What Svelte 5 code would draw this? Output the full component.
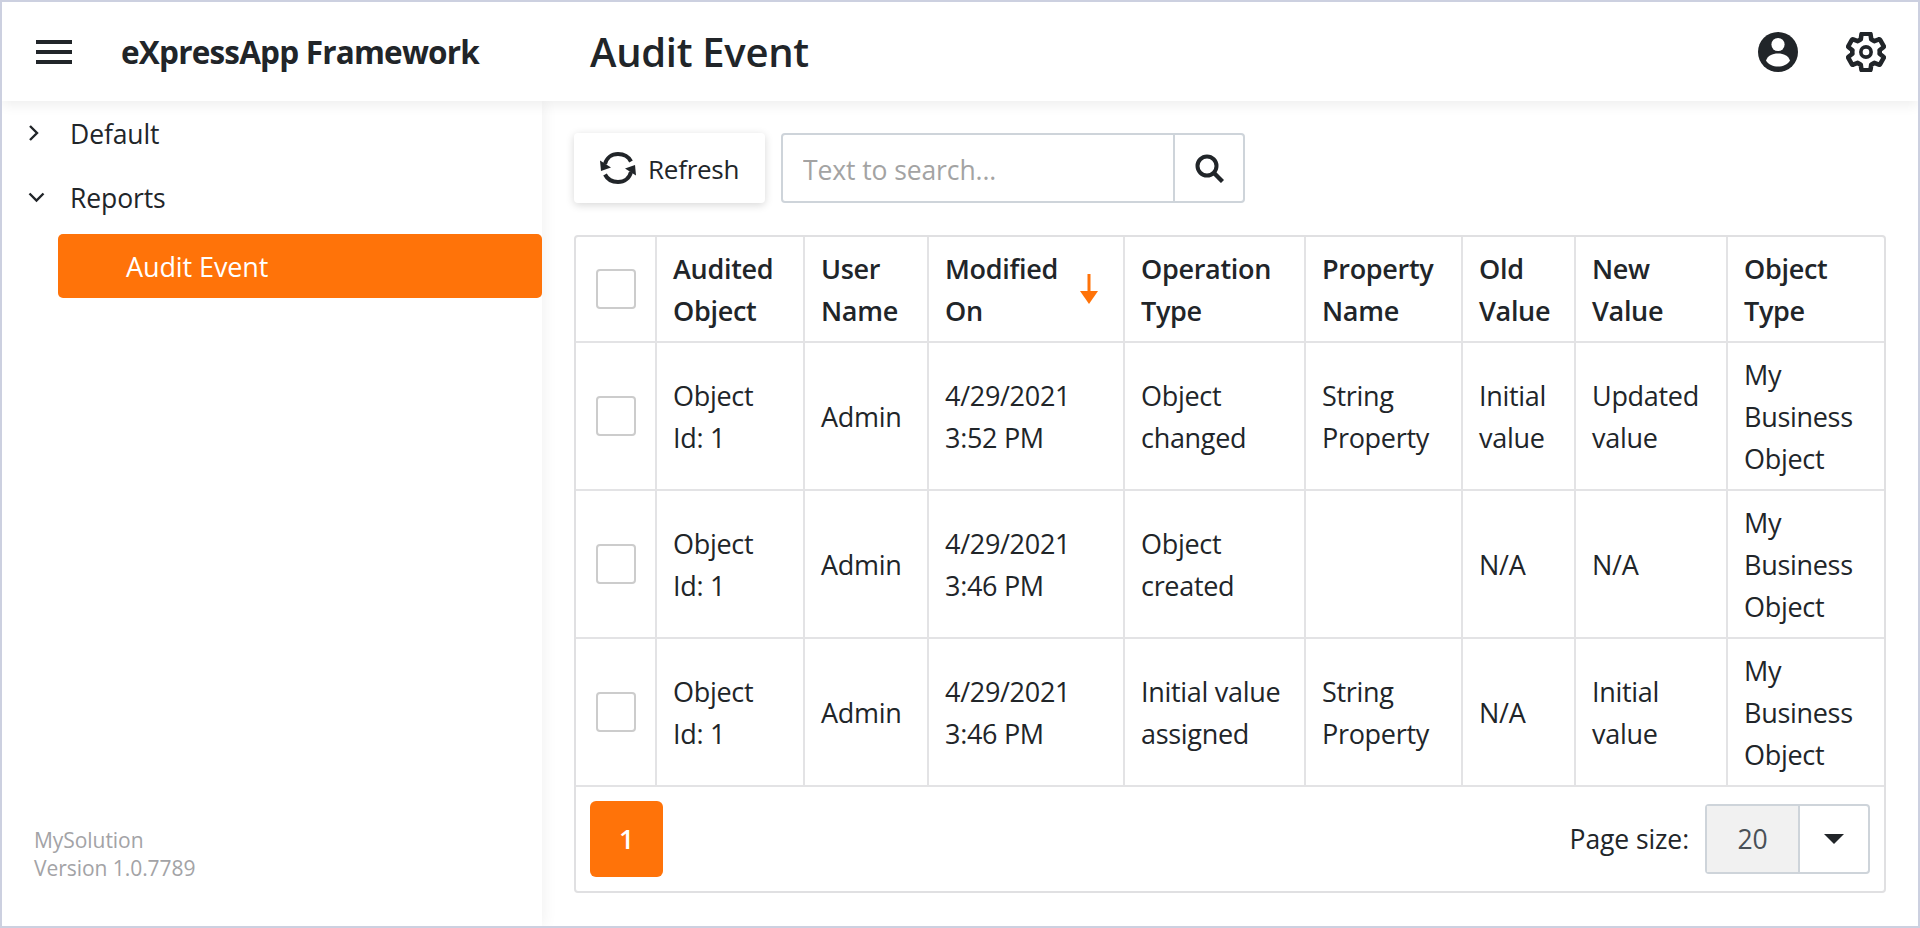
<script>
  const columns = [
    { label: ['Audited', 'Object'], width: 148 },
    { label: ['User', 'Name'], width: 124 },
    { label: ['Modified', 'On'], width: 196, sorted: true },
    { label: ['Operation', 'Type'], width: 181 },
    { label: ['Property', 'Name'], width: 157 },
    { label: ['Old', 'Value'], width: 113 },
    { label: ['New', 'Value'], width: 152 },
    { label: ['Object', 'Type'], width: 156 }
  ];
  const rows = [
    ['Object\nId: 1', 'Admin', '4/29/2021 3:52 PM', 'Object changed', 'String Property', 'Initial value', 'Updated value', 'My Business Object'],
    ['Object\nId: 1', 'Admin', '4/29/2021 3:46 PM', 'Object created', '', 'N/A', 'N/A', 'My Business Object'],
    ['Object\nId: 1', 'Admin', '4/29/2021 3:46 PM', 'Initial value assigned', 'String Property', 'N/A', 'Initial value', 'My Business Object']
  ];
</script>

<div class="app">
  <header class="topbar">
    <svg class="burger" width="36" height="24" viewBox="0 0 36 24" fill="#212529" aria-hidden="true">
      <rect y="0" width="36" height="4" /><rect y="10" width="36" height="4" /><rect y="20" width="36" height="4" />
    </svg>
    <div class="brand">eXpressApp Framework</div>
    <h1 class="page-title">Audit Event</h1>
    <div class="top-actions">
      <svg width="40" height="40" viewBox="0 0 40 40" aria-hidden="true">
        <circle cx="20" cy="20" r="20" fill="#212529" />
        <circle cx="20" cy="12.5" r="6.6" fill="#fff" />
        <path d="M8 28.5C10 23.5 14 21.5 20 21.5S30 23.5 32 28.5C29.5 32.5 25 34.5 20 34.5S10.500 32.500 8 28.500Z" fill="#fff" />
      </svg>
      <svg width="40" height="40" viewBox="1.500 1.500 21 21" fill="none" stroke="#212529" aria-hidden="true">
        <path stroke-width="2.400" stroke-linejoin="round" d="M19.140 12.940c.04-.3.06-.61.06-.94 0-.32-.02-.64-.07-.94l2.030-1.580c.18-.14.23-.41.120-.61l-1.920-3.320c-.12-.22-.37-.29-.59-.22l-2.390.96c-.5-.38-1.030-.7-1.620-.94l-.36-2.540c-.04-.24-.24-.41-.48-.41h-3.840c-.24 0-.43.17-.47.41l-.36 2.540c-.59.24-1.130.57-1.620.94l-2.390-.96c-.22-.08-.47 0-.59.22L2.740 8.870c-.12.21-.08.47.12.61l2.030 1.580c-.05.3-.09.63-.09.94s.02.64.07.94l-2.030 1.580c-.18.14-.23.41-.12.61l1.920 3.320c.12.22.37.29.59.22l2.390-.96c.5.38 1.030.7 1.620.94l.36 2.540c.05.24.24.41.48.41h3.840c.24 0 .44-.17.47-.41l.36-2.540c.59-.24 1.130-.56 1.620-.94l2.390.96c.22.08.47 0 .59-.22l1.920-3.320c.12-.22.07-.47-.12-.61l-2.010-1.580z" />
        <circle cx="12" cy="12" r="2.700" stroke-width="1.900" />
      </svg>
    </div>
  </header>

  <div class="body">
    <aside class="sidebar">
      <nav class="nav">
        <div class="nav-row">
          <span class="chev">
            <svg width="12" height="16" viewBox="0 0 12 16" fill="none" stroke="#212529" stroke-width="2.400" aria-hidden="true"><path d="M2 1l7 7-7 7" /></svg>
          </span>
          Default
        </div>
        <div class="nav-row">
          <span class="chev">
            <svg width="17" height="11" viewBox="0 0 17 11" fill="none" stroke="#212529" stroke-width="2.400" aria-hidden="true"><path d="M1.500 1.500l7 7 7-7" /></svg>
          </span>
          Reports
        </div>
        <div class="nav-active">Audit Event</div>
      </nav>
      <div class="about">MySolution<br />Version 1.0.7789</div>
    </aside>

    <main class="main">
      <div class="toolbar">
        <button class="refresh">
          <svg width="36" height="32" viewBox="0 0 36 32" fill="none" aria-hidden="true">
            <path d="M31 9.500C28.500 4.500 23.800 2 18 2 11.500 2 6.500 6 5 12" stroke="#212529" stroke-width="4" />
            <path d="M0 8.500 1 19 11 15.500Z" fill="#212529" />
            <g transform="rotate(180 18 16)">
              <path d="M31 9.500C28.500 4.500 23.800 2 18 2 11.500 2 6.500 6 5 12" stroke="#212529" stroke-width="4" />
              <path d="M0 8.500 1 19 11 15.500Z" fill="#212529" />
            </g>
          </svg>
          <span>Refresh</span>
        </button>
        <div class="search">
          <input class="search-input" placeholder="Text to search..." />
          <span class="search-btn">
            <svg width="29" height="29" viewBox="0 0 29 29" fill="none" stroke="#212529" aria-hidden="true">
              <circle cx="12" cy="12" r="9.500" stroke-width="4" />
              <path d="M19 19l8.500 8.500" stroke-width="4.400" />
            </svg>
          </span>
        </div>
      </div>

      <section class="card">
        <table>
          <colgroup>
            <col style="width:81px" />
            {#each columns as c}
              <col style="width:{c.width}px" />
            {/each}
          </colgroup>
          <thead>
            <tr>
              <th class="check"><span class="box"></span></th>
              {#each columns as c}
                <th>
                  {c.label[0]}<br />{c.label[1]}
                  {#if c.sorted}
                    <svg class="sort" width="18" height="30" viewBox="0 0 18 30" fill="#ff7309" aria-hidden="true">
                      <rect x="7.500" y="0" width="3" height="20" /><path d="M0 17h18L9 30z" />
                    </svg>
                  {/if}
                </th>
              {/each}
            </tr>
          </thead>
          <tbody>
            {#each rows as row}
              <tr>
                <td class="check"><span class="box"></span></td>
                {#each row as cell}
                  <td>{cell}</td>
                {/each}
              </tr>
            {/each}
          </tbody>
        </table>
        <div class="pager">
          <button class="page-btn">1</button>
          <div class="page-size">
            <span>Page size:</span>
            <div class="size-select">
              <span class="size-value">20</span>
              <span class="size-caret">
                <svg width="20" height="10" viewBox="0 0 20 10" fill="#212529" aria-hidden="true"><path d="M0 0h20L10 10z" /></svg>
              </span>
            </div>
          </div>
        </div>
      </section>
    </main>
  </div>
</div>

<style>
  :global(body) {
    margin: 0;
    background: #fff;
  }
  .app {
    box-sizing: border-box;
    width: 1920px;
    height: 928px;
    border: 2px solid #ccd0e0;
    display: flex;
    flex-direction: column;
    font-family: "Open Sans", "Noto Sans", sans-serif;
    font-size: 26.5px;
    line-height: 42px;
    letter-spacing: -0.1px;
    color: #212529;
    background: #fff;
    overflow: hidden;
  }
  .topbar {
    flex: 0 0 99px;
    display: flex;
    align-items: center;
    padding: 0 32px 0 34px;
    position: relative;
    z-index: 2;
    background: #fff;
    box-shadow: 0 4px 12px rgba(0, 0, 0, 0.07);
  }
  .burger {
    flex: none;
    margin-right: 49px;
  }
  .brand {
    width: 469px;
    flex: none;
    font-size: 31.5px;
    font-weight: 700;
    letter-spacing: -0.8px;
  }
  .page-title {
    margin: 0;
    font-size: 40px;
    font-weight: 600;
    letter-spacing: -0.3px;
  }
  .top-actions {
    margin-left: auto;
    display: flex;
    gap: 48px;
  }
  .top-actions svg {
    display: block;
  }
  .body {
    flex: 1;
    display: flex;
    min-height: 0;
  }
  .sidebar {
    flex: 0 0 540px;
    display: flex;
    flex-direction: column;
    justify-content: space-between;
    position: relative;
    z-index: 1;
    background: #fff;
    box-shadow: 2px 0 14px rgba(0, 0, 0, 0.06);
  }
  .nav-row {
    box-sizing: border-box;
    height: 64px;
    display: flex;
    align-items: center;
    padding: 2px 0 0 24px;
  }
  .chev {
    width: 44px;
    display: flex;
    align-items: center;
    padding-left: 2px;
    margin-top: -2px;
    box-sizing: border-box;
  }
  .nav-active {
    box-sizing: border-box;
    margin: 5px 0 0 56px;
    height: 64px;
    display: flex;
    align-items: center;
    padding: 2px 0 0 68px;
    background: #ff7309;
    color: #fff;
    border-radius: 5px;
    font-size: 27px;
  }
  .about {
    padding: 0 0 44px 32px;
    font-size: 21px;
    line-height: 28px;
    letter-spacing: -0.05px;
    color: #a3a3a6;
  }
  .main {
    flex: 1;
    min-width: 0;
    padding: 32px 32px 0;
    display: flex;
    flex-direction: column;
    gap: 32px;
  }
  .toolbar {
    display: flex;
    height: 70px;
    gap: 16px;
  }
  .refresh {
    width: 191px;
    display: flex;
    align-items: center;
    gap: 12px;
    padding: 2px 0 0 26px;
    border: 0;
    border-radius: 4px;
    background: #fff;
    box-shadow: 0 2px 8px rgba(0, 0, 0, 0.16);
    font: inherit;
    font-size: 26px;
    letter-spacing: -0.25px;
    color: inherit;
  }
  .refresh svg {
    margin-top: -2px;
  }
  .search {
    box-sizing: border-box;
    width: 464px;
    display: flex;
    border: 2px solid #ced4da;
    border-radius: 4px;
  }
  .search-input {
    flex: 1;
    min-width: 0;
    border: 0;
    outline: 0;
    padding: 3px 20px 0;
    background: transparent;
    font: inherit;
    letter-spacing: inherit;
    color: inherit;
  }
  .search-input::placeholder {
    color: #a3a3a3;
    opacity: 1;
  }
  .search-btn {
    flex: 0 0 70px;
    display: flex;
    align-items: center;
    justify-content: center;
    border-left: 2px solid #ced4da;
    box-sizing: border-box;
  }
  .card {
    box-sizing: border-box;
    height: 658px;
    border: 2px solid #e0e0e2;
    border-radius: 4px;
    display: flex;
    flex-direction: column;
  }
  table {
    width: 1308px;
    table-layout: fixed;
    border-collapse: separate;
    border-spacing: 0;
  }
  th,
  td {
    box-sizing: border-box;
    padding: 11px 14px 9px 16px;
    border-right: 2px solid #e3e3e5;
    border-bottom: 2px solid #e3e3e5;
    text-align: left;
    vertical-align: middle;
    white-space: pre-line;
    font-size: 27px;
    letter-spacing: -0.3px;
  }
  th:last-child,
  td:last-child {
    border-right: 0;
  }
  th {
    font-weight: 600;
    position: relative;
  }
  th.check,
  td.check {
    padding: 0;
  }
  .box {
    display: block;
    box-sizing: border-box;
    width: 40px;
    height: 40px;
    margin-left: 20px;
    border: 2px solid #ccc;
    border-radius: 4px;
    background: #fff;
  }
  .sort {
    position: absolute;
    right: 25px;
    top: 37px;
  }
  .pager {
    flex: 1;
    display: flex;
    align-items: center;
    justify-content: space-between;
    padding: 0 14px 0 14px;
  }
  .page-btn {
    width: 73px;
    height: 76px;
    border: 0;
    border-radius: 6px;
    background: #ff7309;
    color: #fff;
    font: inherit;
    font-weight: 600;
  }
  .page-size {
    display: flex;
    align-items: center;
    gap: 16px;
  }
  .size-select {
    box-sizing: border-box;
    width: 165px;
    height: 70px;
    display: flex;
    border: 2px solid #ced4da;
    border-radius: 4px;
  }
  .size-value {
    flex: 0 0 93px;
    box-sizing: border-box;
    display: flex;
    align-items: center;
    justify-content: center;
    background: #f1f1f1;
    color: #495057;
    border-right: 2px solid #ced4da;
  }
  .size-caret {
    flex: 1;
    display: flex;
    align-items: center;
    justify-content: center;
  }
</style>
